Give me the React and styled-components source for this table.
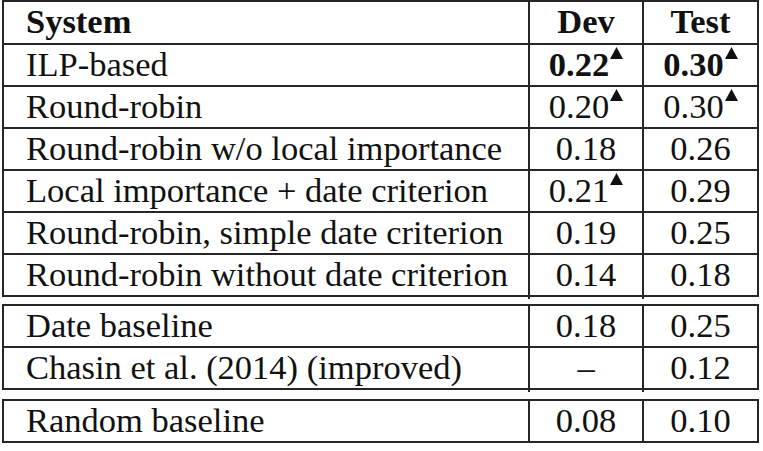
import React from "react";
import styled, { createGlobalStyle } from "styled-components";

const GlobalStyle = createGlobalStyle`
*, *::before, *::after {
  box-sizing: border-box;
}
body {
  margin: 0;
  background: #fff;
  color: #111;
  font-family: "Liberation Serif", serif;
}
`;

const Page = styled.div`
  display: flex;
  flex-direction: column;
  gap: ${(p) => p.gap}px;
  padding: 0 0 0 2px;
`;

const Group = styled.div`
  width: 757px;
  border: 2px solid #262626;
  margin-top: ${(p) => p.mt || 0}px;
`;

const Row = styled.div`
  display: grid;
  grid-template-columns: 524px 114px 1fr;
  height: ${(p) => p.h}px;
  & + & {
    border-top: 2px solid #262626;
    height: ${(p) => p.h + 2}px;
  }
`;

const Cell = styled.div`
  display: flex;
  align-items: center;
  justify-content: ${(p) => (p.num ? "center" : "flex-start")};
  padding: 0 0 5px ${(p) => (p.num ? 0 : 22)}px;
  font-family: "Liberation Serif", serif;
  font-size: 34.5px;
  font-weight: ${(p) => (p.bold ? 700 : 400)};
  white-space: nowrap;
  & + & {
    border-left: 2px solid #262626;
  }
`;

const Tri = styled.svg`
  width: 13px;
  height: 12px;
  margin-left: 1px;
  align-self: flex-start;
  margin-top: 2px;
`;

function Mark() {
  return (
    <Tri viewBox="0 0 13 12">
      <path d="M6.5 0 L13 12 L0 12 Z" fill="#111" />
    </Tri>
  );
}

const groups = [
  {
    h: 40.86,
    rows: [
      { name: "ILP-based", dev: "0.22", devM: true, test: "0.30", testM: true, bold: true },
      { name: "Round-robin", dev: "0.20", devM: true, test: "0.30", testM: true },
      { name: "Round-robin w/o local importance", dev: "0.18", test: "0.26" },
      { name: "Local importance + date criterion", dev: "0.21", devM: true, test: "0.29" },
      { name: "Round-robin, simple date criterion", dev: "0.19", test: "0.25" },
      { name: "Round-robin without date criterion", dev: "0.14", test: "0.18" },
    ],
  },
  {
    h: 40,
    mt: 7,
    rows: [
      { name: "Date baseline", dev: "0.18", test: "0.25" },
      { name: "Chasin et al. (2014) (improved)", dev: "–", test: "0.12" },
    ],
  },
  {
    h: 40,
    mt: 9,
    rows: [{ name: "Random baseline", dev: "0.08", test: "0.10" }],
  },
];

export default function App() {
  return (
    <>
      <GlobalStyle />
      <Page gap={0}>
        {groups.map((g, gi) => (
          <Group key={gi} mt={g.mt}>
            {gi === 0 && (
              <Row h={g.h}>
                <Cell bold>System</Cell>
                <Cell num bold>Dev</Cell>
                <Cell num bold>Test</Cell>
              </Row>
            )}
            {g.rows.map((r) => (
              <Row key={r.name} h={g.h}>
                <Cell>{r.name}</Cell>
                <Cell num bold={r.bold}>
                  {r.dev}
                  {r.devM && <Mark />}
                </Cell>
                <Cell num bold={r.bold}>
                  {r.test}
                  {r.testM && <Mark />}
                </Cell>
              </Row>
            ))}
          </Group>
        ))}
      </Page>
    </>
  );
}
